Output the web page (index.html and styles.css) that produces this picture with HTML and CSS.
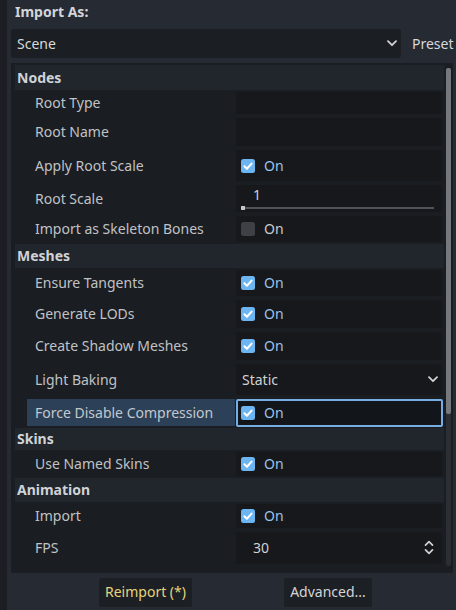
FILE: index.html
```html
<!DOCTYPE html>
<html>
<head>
<meta charset="utf-8">
<link rel="stylesheet" href="styles.css">
</head>
<body>
<div class="dock">
  <div class="strip"></div>
  <div class="main">
    <div class="title">Import As:</div>
    <div class="import-row">
      <div class="select">
        <span>Scene</span>
        <svg class="chev" width="10" height="7" viewBox="0 0 10 7"><path d="M1 1.2 L5 5.2 L9 1.2" fill="none" stroke="#cfd1d4" stroke-width="1.8" stroke-linecap="round" stroke-linejoin="round"/></svg>
      </div>
      <div class="preset">Preset</div>
    </div>
    <div class="tree">
      <div class="rows">
        <div class="section h25">Nodes</div>
        <div class="prop h26"><div class="label">Root Type</div><div class="value field"></div></div>
        <div class="prop h32"><div class="label">Root Name</div><div class="value field"></div></div>
        <div class="prop h35"><div class="label">Apply Root Scale</div><div class="value check on"><span class="box"><svg width="14" height="14" viewBox="0 0 14 14"><rect width="14" height="14" rx="2.5" fill="#6db5f0"/><path d="M3.4 7.3 L5.9 9.7 L10.6 4.6" fill="none" stroke="#fff" stroke-width="2" stroke-linecap="round" stroke-linejoin="round"/></svg></span><span class="txt">On</span></div></div>
        <div class="prop h31"><div class="label">Root Scale</div><div class="value slider"><span class="num">1</span><div class="slide"><span class="knob"></span><span class="track"></span></div></div></div>
        <div class="prop h30"><div class="label">Import as Skeleton Bones</div><div class="value check"><span class="box"><svg width="14" height="14" viewBox="0 0 14 14"><rect width="14" height="14" rx="2.5" fill="#3e4045"/></svg></span><span class="txt">On</span></div></div>
        <div class="section h24">Meshes</div>
        <div class="prop h30"><div class="label">Ensure Tangents</div><div class="value check on"><span class="box"><svg width="14" height="14" viewBox="0 0 14 14"><rect width="14" height="14" rx="2.5" fill="#6db5f0"/><path d="M3.4 7.3 L5.9 9.7 L10.6 4.6" fill="none" stroke="#fff" stroke-width="2" stroke-linecap="round" stroke-linejoin="round"/></svg></span><span class="txt">On</span></div></div>
        <div class="prop h32"><div class="label">Generate LODs</div><div class="value check on"><span class="box"><svg width="14" height="14" viewBox="0 0 14 14"><rect width="14" height="14" rx="2.5" fill="#6db5f0"/><path d="M3.4 7.3 L5.9 9.7 L10.6 4.6" fill="none" stroke="#fff" stroke-width="2" stroke-linecap="round" stroke-linejoin="round"/></svg></span><span class="txt">On</span></div></div>
        <div class="prop h32"><div class="label">Create Shadow Meshes</div><div class="value check on"><span class="box"><svg width="14" height="14" viewBox="0 0 14 14"><rect width="14" height="14" rx="2.5" fill="#6db5f0"/><path d="M3.4 7.3 L5.9 9.7 L10.6 4.6" fill="none" stroke="#fff" stroke-width="2" stroke-linecap="round" stroke-linejoin="round"/></svg></span><span class="txt">On</span></div></div>
        <div class="prop h35"><div class="label">Light Baking</div><div class="value enum"><span>Static</span><svg class="chev" width="10" height="7" viewBox="0 0 10 7"><path d="M1 1.2 L5 5.2 L9 1.2" fill="none" stroke="#cfd1d4" stroke-width="1.8" stroke-linecap="round" stroke-linejoin="round"/></svg></div></div>
        <div class="prop h31 selected"><div class="label">Force Disable Compression</div><div class="value check on focus"><span class="box"><svg width="14" height="14" viewBox="0 0 14 14"><rect width="14" height="14" rx="2.5" fill="#6db5f0"/><path d="M3.4 7.3 L5.9 9.7 L10.6 4.6" fill="none" stroke="#fff" stroke-width="2" stroke-linecap="round" stroke-linejoin="round"/></svg></span><span class="txt">On</span></div></div>
        <div class="section h22">Skins</div>
        <div class="prop h28"><div class="label">Use Named Skins</div><div class="value check on"><span class="box"><svg width="14" height="14" viewBox="0 0 14 14"><rect width="14" height="14" rx="2.5" fill="#6db5f0"/><path d="M3.4 7.3 L5.9 9.7 L10.6 4.6" fill="none" stroke="#fff" stroke-width="2" stroke-linecap="round" stroke-linejoin="round"/></svg></span><span class="txt">On</span></div></div>
        <div class="section h24">Animation</div>
        <div class="prop h28"><div class="label">Import</div><div class="value check on"><span class="box"><svg width="14" height="14" viewBox="0 0 14 14"><rect width="14" height="14" rx="2.5" fill="#6db5f0"/><path d="M3.4 7.3 L5.9 9.7 L10.6 4.6" fill="none" stroke="#fff" stroke-width="2" stroke-linecap="round" stroke-linejoin="round"/></svg></span><span class="txt">On</span></div></div>
        <div class="prop h36"><div class="label">FPS</div><div class="value spin"><span>30</span><svg width="10" height="15" viewBox="0 0 10 15"><path d="M1.5 5.2 L5 1.7 L8.5 5.2 M1.5 9.8 L5 13.3 L8.5 9.8" fill="none" stroke="#cfd1d4" stroke-width="1.7" stroke-linecap="round" stroke-linejoin="round"/></svg></div></div>
      </div>
      <div class="scrollbar"><div class="grab"></div></div>
    </div>
    <div class="buttons">
      <div class="btn reimport">Reimport (*)</div>
      <div class="btn advanced">Advanced...</div>
    </div>
  </div>
</div>
</body>
</html>
```
FILE: styles.css
```css
html, body {
  margin: 0;
  padding: 0;
}
body {
  width: 456px;
  height: 610px;
  overflow: hidden;
  background: #262a33;
  font-family: "Noto Sans", "DejaVu Sans", sans-serif;
  font-size: 14px;
  color: #c2c4c7;
}
.dock {
  display: flex;
  height: 610px;
}
.strip {
  width: 7px;
  flex: none;
  background: #1c1e23;
}
.main {
  flex: 1;
  min-width: 0;
  padding: 0 3px 0 4px;
  display: flex;
  flex-direction: column;
  overflow: hidden;
}
.title {
  height: 29px;
  line-height: 24px;
  padding-left: 4px;
  font-weight: bold;
  color: #d3d5d8;
}
.import-row {
  display: flex;
  align-items: center;
  height: 29px;
  white-space: nowrap;
}
.select {
  width: 390px;
  height: 29px;
  flex: none;
  box-sizing: border-box;
  background: #1b1e23;
  border-radius: 3px;
  display: flex;
  align-items: center;
  justify-content: space-between;
  padding: 0 4px 0 6px;
  color: #d6d8da;
}
.preset {
  margin-left: 11px;
  color: #d6d8da;
}
.tree {
  margin-top: 5px;
  height: 510px;
  box-sizing: border-box;
  background: #1a1d22;
  display: flex;
  padding: 2px 2px 7px 4px;
}
.rows {
  width: 429px;
  flex: none;
  display: flex;
  flex-direction: column;
}
.section {
  background: #21252c;
  font-weight: bold;
  color: #d0d3d6;
  padding: 0 0 1px 2px;
  box-sizing: border-box;
  display: flex;
  align-items: center;
}
.prop {
  display: flex;
  align-items: stretch;
}
.h22 { height: 22px; }
.h24 { height: 24px; }
.h25 { height: 25px; }
.h26 { height: 26px; }
.h28 { height: 28px; }
.h30 { height: 30px; }
.h31 { height: 31px; }
.h32 { height: 32px; }
.h35 { height: 35px; }
.h36 { height: 36px; }
.label {
  width: 209px;
  flex: none;
  margin-left: 12px;
  padding: 0 0 1px 8px;
  box-sizing: border-box;
  display: flex;
  align-items: center;
  white-space: nowrap;
  color: #c0c2c5;
}
.selected .label {
  background: #2c4157;
  margin: 2px 1px 2px 12px;
  width: 208px;
  padding-bottom: 1px;
  color: #c3c8ce;
}
.value {
  flex: 1;
  margin: 2px 2px 2px 0;
  background: #16181c;
  border-radius: 2px;
  display: flex;
  align-items: center;
  box-sizing: border-box;
}
.check {
  padding-left: 5px;
}
.check .box {
  display: flex;
  width: 14px;
  height: 14px;
}
.check .txt {
  margin-left: 9px;
  margin-top: -1px;
  color: #c9cbce;
}
.check.on .txt {
  color: #99c3ea;
}
.focus {
  border: 2px solid #76aee4;
  margin: 2px 1px 1px 0;
  padding-left: 3px;
  background: #12151a;
}
.slider {
  flex-direction: column;
  align-items: stretch;
  padding: 1px 8px 0 5px;
}
.slider .num {
  padding-left: 12px;
  line-height: 18px;
  color: #cfd1d4;
}
.slide {
  display: flex;
  align-items: center;
  margin-top: 2px;
}
.knob {
  width: 4px;
  height: 4px;
  background: #c4c6c9;
  flex: none;
}
.track {
  flex: 1;
  height: 2px;
  background: #505358;
}
.enum {
  justify-content: space-between;
  padding: 0 4px 1px 6px;
  color: #d0d2d5;
}
.spin {
  justify-content: space-between;
  padding: 0 8px 1px 17px;
  color: #d0d2d5;
}
.scrollbar {
  width: 5px;
  margin-left: 2px;
  margin-top: 3px;
  flex: none;
  background: #2b2e34;
  border-radius: 2px;
  display: flex;
  flex-direction: column;
}
.grab {
  height: 346px;
  background: #75787d;
  border-radius: 2px;
}
.buttons {
  display: flex;
  margin-top: 5px;
  padding-left: 88px;
  gap: 92px;
}
.btn {
  height: 29px;
  line-height: 28px;
  text-align: center;
  background: #1c1f24;
  border-radius: 2px;
  white-space: nowrap;
  color: #d3d5d8;
}
.reimport {
  width: 93px;
  color: #e6d47a;
}
.advanced {
  width: 88px;
}
```
